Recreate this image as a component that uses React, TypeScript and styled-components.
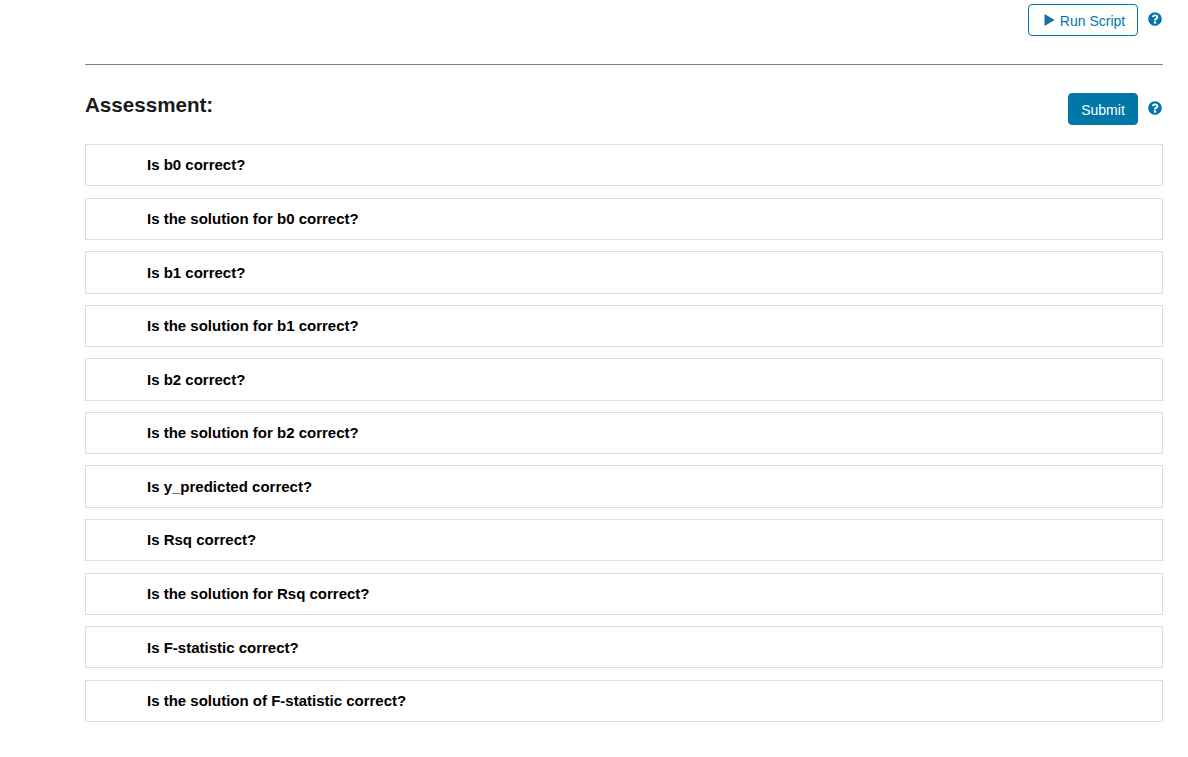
import styled, { createGlobalStyle } from "styled-components";

const GlobalStyle = createGlobalStyle`
  html, body {
    margin: 0;
    padding: 0;
    background: #ffffff;
    font-family: "Liberation Sans", Arial, sans-serif;
  }
`;

const Page = styled.div`
  padding: 4px 25px 35px 85px;
`;

const ActionRow = styled.div`
  display: flex;
  justify-content: flex-end;
  align-items: center;
  gap: 10px;
`;

const HelpIcon = styled.svg`
  width: 14px;
  height: 14px;
  margin: -3px 1px 0 0;
  fill: #0077a8;
  flex: none;
`;

const OutlineButton = styled.button`
  box-sizing: border-box;
  width: 110px;
  height: 32px;
  padding: 1px 0 0 3px;
  display: flex;
  align-items: center;
  justify-content: center;
  gap: 4px;
  background: #ffffff;
  border: 1px solid #0077a8;
  border-radius: 4px;
  color: #0077a8;
  font: 14px "Liberation Sans", Arial, sans-serif;
`;

const PlayIcon = styled.svg`
  width: 12px;
  height: 12px;
  margin-top: -1px;
  fill: #1b6f9f;
`;

const SolidButton = styled.button`
  box-sizing: border-box;
  width: 70px;
  height: 32px;
  padding: 1px 0 0;
  background: #0077a8;
  border: 1px solid #0077a8;
  border-radius: 4px;
  color: #ffffff;
  font: 14px "Liberation Sans", Arial, sans-serif;
`;

const Divider = styled.hr`
  margin: 28px 0 0;
  border: 0;
  border-top: 1px solid #808080;
`;

const HeaderRow = styled.div`
  display: flex;
  justify-content: space-between;
  align-items: flex-start;
  margin-top: 28px;
  margin-bottom: 19.1px;
`;

const Heading = styled.h2`
  margin: 0;
  font-size: 20.6px;
  line-height: 24px;
  font-weight: 700;
  color: #1a1a1a;
`;

const QuestionList = styled.div`
  display: flex;
  flex-direction: column;
  gap: 11.25px;
`;

const Question = styled.div`
  box-sizing: border-box;
  height: 42.32px;
  padding: 0 0 0.53px 61px;
  display: flex;
  align-items: center;
  background: #ffffff;
  border: 1px solid #dddddd;
  color: #000000;
  font-size: 15px;
  font-weight: 700;
`;

const questions = [
  "Is b0 correct?",
  "Is the solution for b0 correct?",
  "Is b1 correct?",
  "Is the solution for b1 correct?",
  "Is b2 correct?",
  "Is the solution for b2 correct?",
  "Is y_predicted correct?",
  "Is Rsq correct?",
  "Is the solution for Rsq correct?",
  "Is F-statistic correct?",
  "Is the solution of F-statistic correct?",
];

const Help = () => (
  <HelpIcon viewBox="0 0 512 512">
    <path d="M504 256c0 137-111 248-248 248S8 393 8 256 119 8 256 8s248 111 248 248zM262.700 90c-54.500 0-89.300 23-116.500 63.800-3.500 5.300-2.400 12.400 2.700 16.300l34.700 26.300c5.200 3.900 12.600 3 16.700-2.100 17.900-22.700 30.100-35.800 57.300-35.800 20.400 0 45.700 13.100 45.700 33 0 15-12.400 22.700-32.600 34-23.600 13.200-54.800 29.700-54.800 70.900V302c0 6.600 5.400 12 12 12h56c6.600 0 12-5.400 12-12v-1.300c0-28.600 83.500-29.800 83.500-107.200 0-58.300-60.500-103.500-117.200-103.500zM256 338c-25.400 0-46 20.600-46 46 0 25.400 20.600 46 46 46s46-20.600 46-46c0-25.400-20.600-46-46-46z" />
  </HelpIcon>
);

export default function App() {
  return (
    <>
      <GlobalStyle />
      <Page>
        <ActionRow>
          <OutlineButton>
            <PlayIcon viewBox="0 0 12 12">
              <path d="M0.500 0 L10.700 6 L0.500 12 Z" />
            </PlayIcon>
            Run Script
          </OutlineButton>
          <Help />
        </ActionRow>
        <Divider />
        <HeaderRow>
          <Heading>Assessment:</Heading>
          <ActionRow>
            <SolidButton>Submit</SolidButton>
            <Help />
          </ActionRow>
        </HeaderRow>
        <QuestionList>
          {questions.map((q) => (
            <Question key={q}>{q}</Question>
          ))}
        </QuestionList>
      </Page>
    </>
  );
}
